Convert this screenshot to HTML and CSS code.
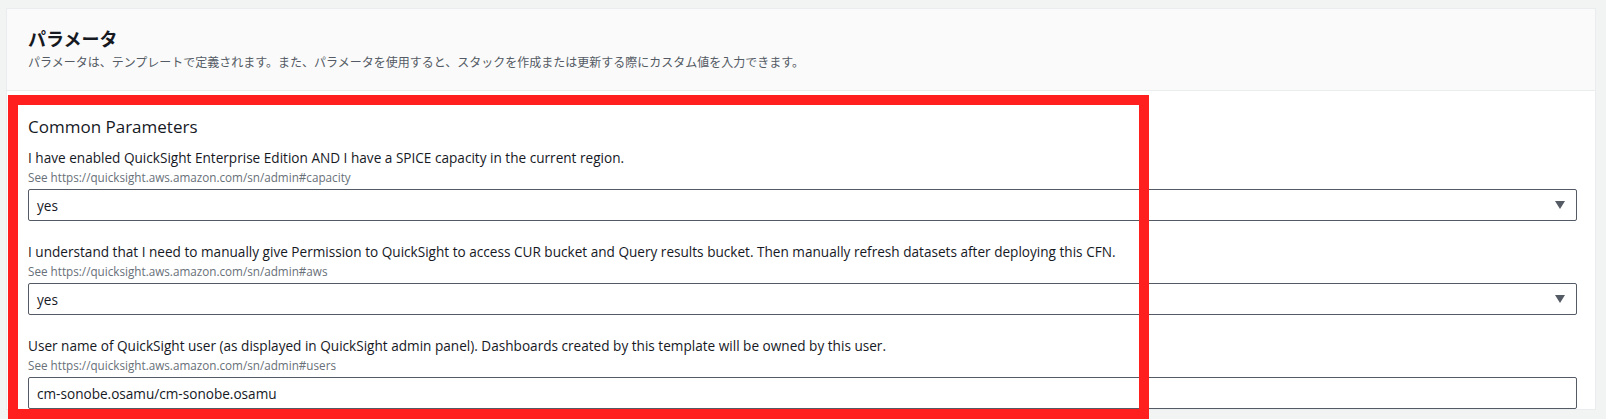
FILE: index.html
```html
<!DOCTYPE html>
<html lang="ja">
<head>
<meta charset="UTF-8">
<title>パラメータ</title>
<link rel="stylesheet" href="styles.css">
</head>
<body>
<div class="card">
	<div class="card-head">
		<h2>パラメータ</h2>
		<p>パラメータは、テンプレートで定義されます。また、パラメータを使用すると、スタックを作成または更新する際にカスタム値を入力できます。</p>
	</div>

	<div class="card-body">
		<h3>Common Parameters</h3>

		<div class="field">
			<div class="label">I have enabled QuickSight Enterprise Edition AND I have a SPICE capacity in the current region.</div>
			<div class="hint">See https://quicksight.aws.amazon.com/sn/admin#capacity</div>
			<div class="select">
				<span>yes</span>
				<svg class="caret" width="10" height="8" viewBox="0 0 10 8"><path d="M0 0H10L5 8Z" fill="#545b64"/></svg>
			</div>
		</div>

		<div class="field">
			<div class="label">I understand that I need to manually give Permission to QuickSight to access CUR bucket and Query results bucket. Then manually refresh datasets after deploying this CFN.</div>
			<div class="hint">See https://quicksight.aws.amazon.com/sn/admin#aws</div>
			<div class="select">
				<span>yes</span>
				<svg class="caret" width="10" height="8" viewBox="0 0 10 8"><path d="M0 0H10L5 8Z" fill="#545b64"/></svg>
			</div>
		</div>

		<div class="field">
			<div class="label">User name of QuickSight user (as displayed in QuickSight admin panel). Dashboards created by this template will be owned by this user.</div>
			<div class="hint">See https://quicksight.aws.amazon.com/sn/admin#users</div>
			<div class="select">
				<span>cm-sonobe.osamu/cm-sonobe.osamu</span>
			</div>
		</div>
	</div>
</div>

<!-- 스크린샷 강조 표시 -->
<div class="mark"></div>
</body>
</html>
```

FILE: styles.css
```css
	body
	{
		margin: 0;
		background: #f2f3f3;
		font-family: "Open Sans", "Noto Sans CJK JP", sans-serif;
		color: #16191f;
		height: 419px;
		overflow: hidden;
	}
	.card
	{
		margin: 8px 10px 0 6px;
		background: #ffffff;
		border: 1px solid #eaeded;
	}
	.card-head
	{
		background: #fafafa;
		border-bottom: 1px solid #eaeded;
		padding: 18px 21px 20px;
	}
	.card-head h2
	{
		margin: 0;
		font-family: "Noto Sans CJK JP", sans-serif;
		font-size: 18px;
		line-height: 22px;
		font-weight: bold;
	}
	.card-head p
	{
		margin: 5px 0 0;
		font-family: "Noto Sans CJK JP", sans-serif;
		font-size: 12px;
		line-height: 16px;
		color: #545b64;
	}
	.card-body
	{
		padding: 25px 18px 0 21px;
	}
	.card-body h3
	{
		margin: 0;
		font-size: 17px;
		line-height: 22px;
		font-weight: normal;
	}
	.field
	{
		margin-top: 21px;
	}
	.field:first-of-type
	{
		margin-top: 10px;
	}
	.label
	{
		font-size: 13.6px;
		line-height: 20px;
	}
	.hint
	{
		margin: 1px 0 4px;
		font-size: 11.7px;
		line-height: 16px;
		color: #687078;
	}
	.select
	{
		display: flex;
		align-items: center;
		justify-content: space-between;
		height: 30px;
		border: 1px solid #545b64;
		border-radius: 2px;
		padding: 0 11px 0 8px;
		font-size: 13.6px;
	}
	.mark
	{
		position: absolute;
		left: 8px;
		top: 95px;
		width: 1121px;
		height: 304px;
		border: 10px solid #ff1f1f;
	}
```
